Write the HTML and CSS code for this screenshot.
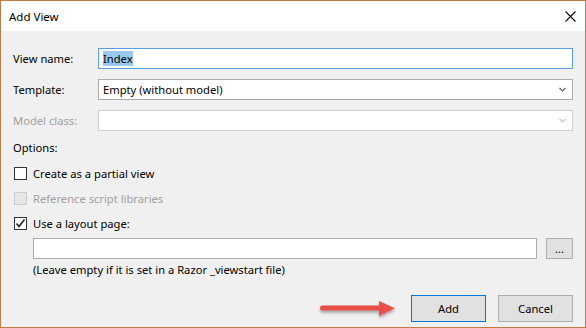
FILE: index.html
```html
<!DOCTYPE html>
<html>
<head>
<meta charset="utf-8">
<link rel="stylesheet" href="styles.css">
</head>
<body>
<div class="window">
  <div class="titlebar">
    <span class="title">Add View</span>
    <svg class="close" width="11" height="11" viewBox="0 0 11 11"><path d="M0.5 0.5 L10.5 10.5 M10.5 0.5 L0.5 10.5" stroke="#000" stroke-width="1.1" fill="none"/></svg>
  </div>
  <div class="content">
    <div class="fields">
      <span class="label">View name:</span>
      <div class="field focused"><span class="sel">Index</span></div>
      <span class="label">Template:</span>
      <div class="field"><span>Empty (without model)</span>
        <svg class="chev" width="7" height="5" viewBox="0 0 7 5"><path d="M0.5 0.8 L3.5 3.8 L6.5 0.8" stroke="#5a5a5a" stroke-width="1.2" fill="none"/></svg>
      </div>
      <span class="label disabled">Model class:</span>
      <div class="field off"><span></span>
        <svg class="chev" width="7" height="5" viewBox="0 0 7 5"><path d="M0.5 0.8 L3.5 3.8 L6.5 0.8" stroke="#c4c4c4" stroke-width="1.2" fill="none"/></svg>
      </div>
    </div>
    <div class="options">Options:</div>
    <div class="check-row first"><span class="box"></span><span>Create as a partial view</span></div>
    <div class="check-row"><span class="box off"></span><span class="disabled">Reference script libraries</span></div>
    <div class="check-row"><span class="box"><svg width="11" height="11" viewBox="0 0 11 11"><path d="M1.5 5.5 L4 8.5 L9.5 1.5" stroke="#222" stroke-width="1.7" fill="none"/></svg></span><span>Use a layout page:</span></div>
    <div class="layout-row">
      <div class="layout-input"></div>
      <div class="browse">...</div>
    </div>
    <div class="hint">(Leave empty if it is set in a Razor _viewstart file)</div>
    <div class="actions">
      <svg class="arrow" width="82" height="22" viewBox="0 0 82 22">
        <defs>
          <filter id="sh" x="-20%" y="-40%" width="140%" height="200%">
            <feDropShadow dx="0" dy="2" stdDeviation="1.4" flood-color="#000" flood-opacity="0.35"/>
          </filter>
        </defs>
        <g filter="url(#sh)" fill="#e8504a">
          <rect x="4" y="7.5" width="62" height="5" rx="2.5"/>
          <path d="M63 3 L79 10.2 L63 18 Z"/>
        </g>
      </svg>
      <div class="btn primary">Add</div>
      <div class="btn">Cancel</div>
    </div>
  </div>
</div>
</body>
</html>
```

FILE: styles.css
```css
body {
  margin: 0;
  font-family: "Noto Sans", sans-serif;
  font-size: 11.2px;
  color: #000;
}
.window {
  width: 586px;
  height: 328px;
  box-sizing: border-box;
  border: 1px solid #c07b44;
  display: flex;
  flex-direction: column;
  background: #f0f0f0;
}
.titlebar {
  height: 30px;
  flex: none;
  background: #fff;
  display: flex;
  align-items: center;
  justify-content: space-between;
  padding: 0 9px 0 8px;
}
.title {
  font-size: 11.5px;
}
.content {
  flex: 1;
  padding: 17px 12px 0 12px;
}
.fields {
  display: grid;
  grid-template-columns: 85px 1fr;
  grid-auto-rows: 21px;
  row-gap: 10px;
  align-items: center;
}
.disabled {
  color: #a0a0a0;
}
.field {
  height: 21px;
  box-sizing: border-box;
  border: 1px solid #acacac;
  background: #fff;
  display: flex;
  align-items: center;
  justify-content: space-between;
  padding: 0 6px 0 4px;
}
.field.focused {
  border-color: #5b9fe3;
}
.field.off {
  border-color: #cfcfcf;
}
.sel {
  background: #99c9ef;
}
.chev {
  display: block;
}
.options {
  margin-top: 9px;
  line-height: 16px;
}
.check-row {
  height: 25px;
  display: flex;
  align-items: center;
  gap: 6px;
  padding-left: 1px;
}
.check-row.first {
  margin-top: 5px;
}
.box {
  width: 13px;
  height: 13px;
  box-sizing: border-box;
  border: 1px solid #333;
  background: #fff;
  display: flex;
  align-items: center;
  justify-content: center;
}
.box.off {
  border-color: #cccccc;
  background: #e6e6e6;
}
.box svg {
  display: block;
}
.layout-row {
  margin: 2px 0 0 20px;
  display: flex;
  gap: 9px;
  height: 21px;
}
.layout-input {
  flex: 1;
  box-sizing: border-box;
  border: 1px solid #acacac;
  background: #fff;
}
.browse {
  width: 27px;
  box-sizing: border-box;
  border: 1px solid #adadad;
  background: #e1e1e1;
  display: flex;
  align-items: center;
  justify-content: center;
  line-height: 1;
}
.hint {
  margin: 3px 0 0 20px;
  line-height: 16px;
}
.actions {
  margin-top: 17px;
  display: flex;
  justify-content: flex-end;
  align-items: center;
  gap: 12px;
}
.arrow {
  display: block;
  margin-right: 1px;
}
.btn {
  width: 75px;
  height: 27px;
  box-sizing: border-box;
  border: 1px solid #adadad;
  background: #e1e1e1;
  display: flex;
  align-items: center;
  justify-content: center;
}
.btn.primary {
  border-color: #0078d7;
}
```
